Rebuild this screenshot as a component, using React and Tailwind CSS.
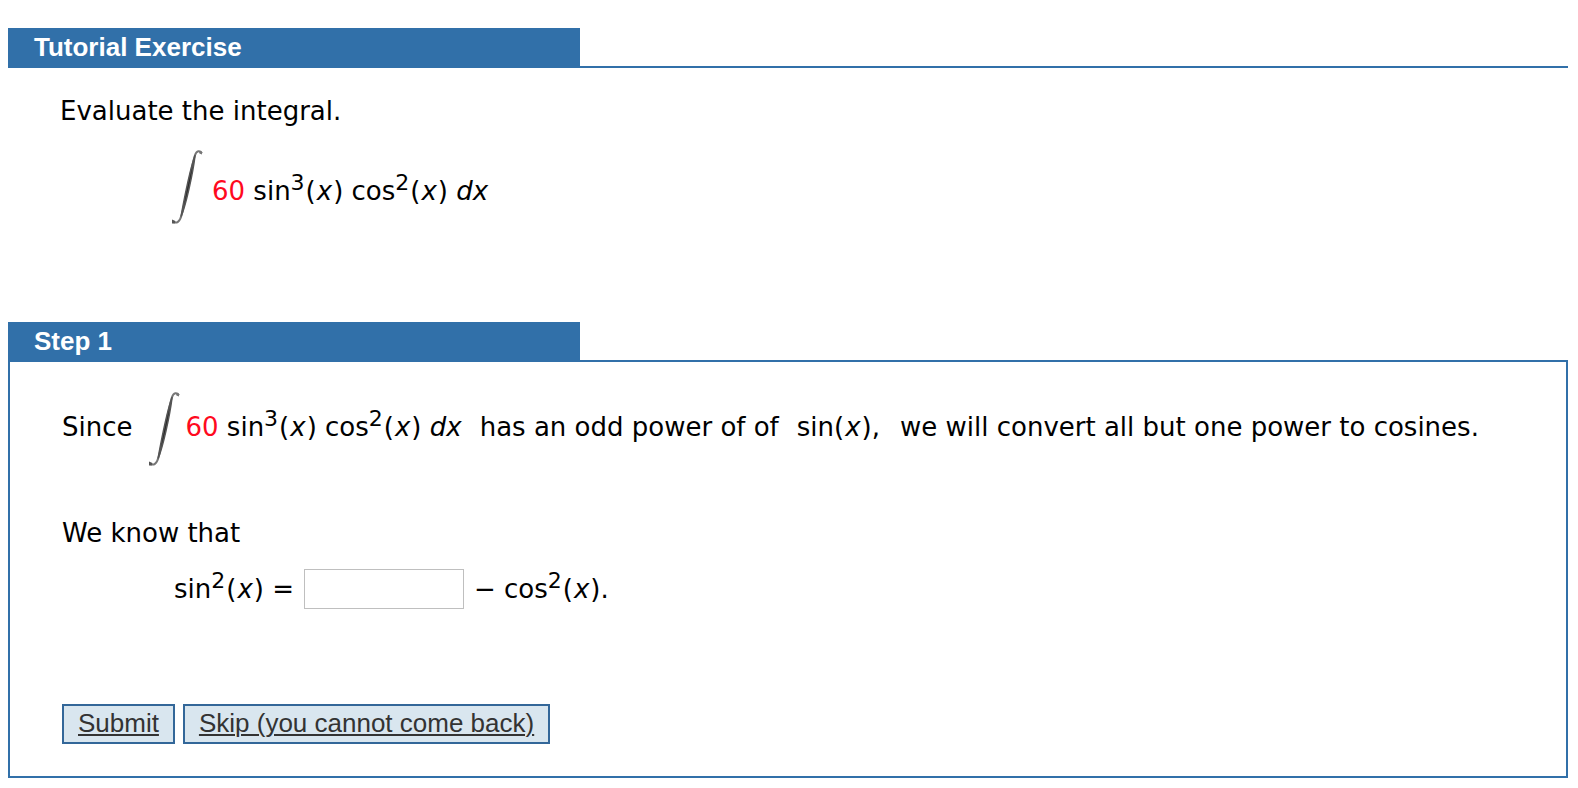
const Var = ({ children }) => <i className="px-px">{children}</i>;

const Sup = ({ children }) => (
  <sup className="relative -top-[10px] mr-px align-baseline text-[22px] leading-none">{children}</sup>
);

const IntegralSign = () => (
  <svg viewBox="0 0 32 76" className="block h-[76px] w-8 shrink-0 self-end" role="img" aria-label="integral of">
    <path
      d="M30 4.2C28 1.2 24.6 1.2 22.9 6.5C18.9 19 13.6 52 9.6 66C7.8 73 4.4 75 1 72.6"
      fill="none"
      stroke="#777777"
      strokeWidth="2"
    />
    <path
      d="M23 6.5C18.8 19 12.6 48 9.2 67C13.8 56 20.8 25 23 6.5Z"
      fill="#222222"
      stroke="#555555"
      strokeWidth="1.6"
      strokeLinejoin="round"
    />
    <path d="M27 2.2L30 2.6V5.4L27.4 4.4Z" fill="#777777" />
    <path d="M0 70.6L3.4 72L2.6 74.4H0Z" fill="#555555" />
  </svg>
);

const Integrand = () => (
  <span>
    <span className="text-[#ff0a1e]">60</span> sin<Sup>3</Sup>(<Var>x</Var>) cos<Sup>2</Sup>(<Var>x</Var>){" "}
    <i>dx</i>
  </span>
);

const SectionHeader = ({ children }) => (
  <header className="border-b-2 border-[#3170a9]">
    <h2 className="h-[38px] w-[572px] max-w-full bg-[#3170a9] pl-[26px] font-['Liberation_Sans',sans-serif] text-[26px] leading-[38px] font-bold text-white">
      {children}
    </h2>
  </header>
);

const ActionButton = ({ children }) => (
  <button
    type="button"
    className="h-10 border-2 border-[#336799] bg-[#d9e6ef] px-[14px] pb-[2px] font-['Liberation_Sans',sans-serif] text-[26px] leading-[34px] text-[#333333] underline decoration-2 underline-offset-2"
  >
    {children}
  </button>
);

export default function App() {
  return (
    <main className="flex flex-col gap-[72px] bg-white pt-7 pr-[10px] pb-[10px] pl-2 font-['DejaVu_Sans',Verdana,sans-serif] text-[26px] leading-8 text-black">
      <section>
        <SectionHeader>Tutorial Exercise</SectionHeader>
        <div className="px-[52px] pt-[27px]">
          <p>Evaluate the integral.</p>
          <div className="flex items-center gap-2 pt-[22px] pb-[25px] pl-[112px]">
            <IntegralSign />
            <div className="pt-2">
              <Integrand />
            </div>
          </div>
        </div>
      </section>

      <section>
        <SectionHeader>Step 1</SectionHeader>
        <div className="border-x-2 border-b-2 border-[#3170a9] px-[52px] pt-[25px] pb-8">
          <div className="flex h-20 items-center whitespace-nowrap">
            <span className="mr-4">Since</span>
            <IntegralSign />
            <span className="ml-[5px]">
              <Integrand />
            </span>
            <span className="ml-[18px]">has an odd power of of</span>
            <span className="ml-[18px]">
              sin(<Var>x</Var>),
            </span>
            <span className="ml-5">we will convert all but one power to cosines.</span>
          </div>
          <p className="pt-[50px]">We know that</p>
          <form onSubmit={(e) => e.preventDefault()}>
            <div className="mt-5 flex h-10 items-center pl-[112px]">
              <label htmlFor="answer">
                sin<Sup>2</Sup>(<Var>x</Var>) =
              </label>
              <input
                id="answer"
                type="text"
                className="mx-[10px] h-10 w-40 border border-[#bfbfbf] bg-white px-2"
              />
              <span>
                − cos<Sup>2</Sup>(<Var>x</Var>).
              </span>
            </div>
            <div className="mt-[95px] flex gap-2">
              <ActionButton>Submit</ActionButton>
              <ActionButton>Skip (you cannot come back)</ActionButton>
            </div>
          </form>
        </div>
      </section>
    </main>
  );
}
